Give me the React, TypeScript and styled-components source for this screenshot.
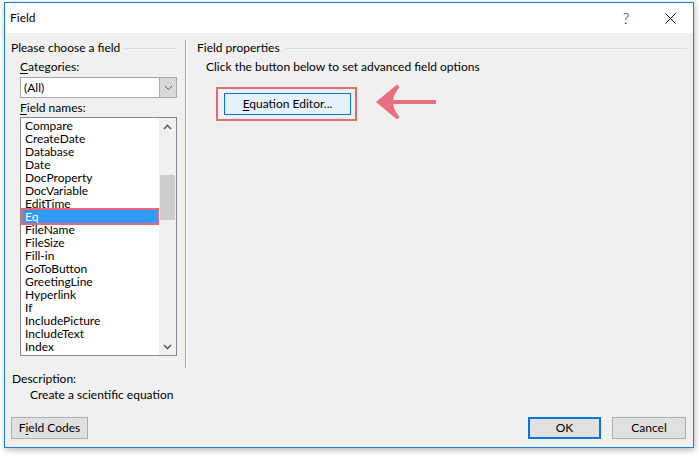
import React from "react";
import styled, { createGlobalStyle } from "styled-components";

const FONT = `Lato, "Noto Sans", sans-serif`;

const Global = createGlobalStyle`
  html, body { margin: 0; padding: 0; background: #ffffff; }
  body { font-family: ${FONT}; font-size: 12px; color: #000; }
  * { box-sizing: border-box; }
`;

const Page = styled.div`
  width: 699px;
  height: 455px;
  padding: 2px 0 0 4px;
`;

const Window = styled.div`
  width: 690px;
  height: 446px;
  border: 1px solid #1c7fd6;
  box-shadow: 1px 2px 6px rgba(0, 0, 0, 0.28);
  display: flex;
  flex-direction: column;
  background: #f0f0f0;
`;

const TitleBar = styled.div`
  height: 30px;
  background: #ffffff;
  display: flex;
  align-items: center;
`;

const Title = styled.div`
  flex: 1;
  padding-left: 5px;
  font-size: 12px;
  line-height: 16px;
`;

const CaptionButton = styled.div<{ $pl?: number }>`
  width: 46px;
  height: 30px;
  display: flex;
  align-items: center;
  justify-content: center;
  padding-left: ${(p) => p.$pl ?? 0}px;
  font-size: 15px;
  font-weight: 300;
  color: #111;
`;

const Body = styled.div`
  flex: 1;
  display: flex;
  flex-direction: column;
  padding: 7px 6px 8px 6px;
`;

const Main = styled.div`
  height: 328px;
  display: flex;
`;

const LeftCol = styled.div`
  width: 166px;
  display: flex;
  flex-direction: column;
`;

const Separator = styled.div`
  margin-left: 8px;
  width: 2px;
  border-left: 1px solid #a0a0a0;
  border-right: 1px solid #ffffff;
`;

const RightCol = styled.div`
  flex: 1;
  display: flex;
  flex-direction: column;
`;

const GroupHeader = styled.div<{ $indent?: number; $gap: number }>`
  display: flex;
  align-items: center;
  height: 16px;
  line-height: 16px;
  padding-left: ${(p) => p.$indent ?? 0}px;
  white-space: nowrap;
  &::after {
    content: "";
    flex: 1;
    height: 1px;
    background: #dcdcdc;
    margin-left: ${(p) => p.$gap}px;
  }
`;

const FieldLabel = styled.div<{ $mt: number }>`
  margin-top: ${(p) => p.$mt}px;
  padding-left: 9px;
  height: 16px;
  line-height: 16px;
`;

const U = styled.span`
  text-decoration: underline;
  text-underline-offset: 2px;
`;

const Combo = styled.div`
  margin: 2px 0 0 9px;
  width: 157px;
  height: 21px;
  border: 1px solid #a8a8a8;
  background: #ffffff;
  display: flex;
`;

const ComboText = styled.div`
  flex: 1;
  padding-left: 3px;
  line-height: 19px;
`;

const ComboButton = styled.div`
  width: 17px;
  background: #dadada;
  border-left: 1px solid #a8a8a8;
  display: flex;
  align-items: center;
  justify-content: center;
`;

const ListBox = styled.div`
  margin: 1px 0 0 9px;
  width: 157px;
  height: 239px;
  border: 1px solid #828790;
  background: #ffffff;
  display: flex;
  overflow: hidden;
`;

const Items = styled.div`
  flex: 1;
  padding-top: 1px;
  display: flex;
  flex-direction: column;
`;

const Item = styled.div<{ $selected?: boolean }>`
  height: 13px;
  line-height: 13px;
  margin: 0 2px;
  padding-left: 2px;
  white-space: nowrap;
  background: ${(p) => (p.$selected ? "#3399ff" : "transparent")};
  color: ${(p) => (p.$selected ? "#ffffff" : "#000000")};
  box-shadow: ${(p) => (p.$selected ? "0 0 0 2px #e0697a" : "none")};
  position: relative;
  z-index: ${(p) => (p.$selected ? 1 : 0)};
`;

const ScrollBar = styled.div`
  width: 17px;
  background: #f0f0f0;
  display: flex;
  flex-direction: column;
`;

const ScrollArrow = styled.div`
  height: 17px;
  display: flex;
  align-items: center;
  justify-content: center;
`;

const Track = styled.div`
  flex: 1;
`;

const Thumb = styled.div`
  margin: 0 1px;
  background: #cdcdcd;
`;

const Intro = styled.div`
  margin: 3px 0 0 19px;
  height: 16px;
  line-height: 16px;
`;

const ActionRow = styled.div`
  margin: 8px 0 0 29px;
  display: flex;
  align-items: center;
`;

const Highlight = styled.div`
  border: 2px solid #e0697a;
  padding: 4px 4px 4px 6px;
`;

const Button = styled.div<{ $w: number; $default?: boolean; $hot?: boolean }>`
  width: ${(p) => p.$w}px;
  height: 22px;
  display: flex;
  align-items: center;
  justify-content: center;
  background: ${(p) => (p.$hot ? "#e5f1fb" : "#e1e1e1")};
  border: ${(p) => (p.$default ? "2px solid #0078d7" : p.$hot ? "1px solid #0078d7" : "1px solid #adadad")};
  font-size: 12px;
  line-height: 16px;
  color: #000;
`;

const ArrowSvg = styled.svg`
  margin: 0 0 3px 19px;
  display: block;
`;

const DescLabel = styled.div`
  margin-top: 3px;
  padding-left: 1px;
  height: 16px;
  line-height: 16px;
`;

const DescText = styled.div`
  padding-left: 19px;
  height: 16px;
  line-height: 16px;
`;

const Footer = styled.div`
  margin-top: 14px;
  display: flex;
  justify-content: space-between;
  padding-right: 1px;
`;

const ButtonGroup = styled.div`
  display: flex;
  gap: 11px;
`;

const Chevron = ({ dir }: { dir: "up" | "down" }) => (
  <svg width="9" height="6" viewBox="0 0 9 6">
    <polyline
      points={dir === "up" ? "1,5 4.5,1.5 8,5" : "1,1 4.5,4.5 8,1"}
      fill="none"
      stroke="#606060"
      strokeWidth="1.6"
    />
  </svg>
);

const names = [
  "Compare",
  "CreateDate",
  "Database",
  "Date",
  "DocProperty",
  "DocVariable",
  "EditTime",
  "Eq",
  "FileName",
  "FileSize",
  "Fill-in",
  "GoToButton",
  "GreetingLine",
  "Hyperlink",
  "If",
  "IncludePicture",
  "IncludeText",
  "Index",
];

export default function App() {
  return (
    <>
      <Global />
      <Page>
        <Window>
          <TitleBar>
            <Title>Field</Title>
            <CaptionButton $pl={4}>?</CaptionButton>
            <CaptionButton>
              <svg width="11" height="11" viewBox="0 0 11 11">
                <path d="M0.5 0.5 L10.5 10.5 M10.5 0.5 L0.5 10.5" stroke="#111" strokeWidth="1" />
              </svg>
            </CaptionButton>
          </TitleBar>
          <Body>
            <Main>
              <LeftCol>
                <GroupHeader $gap={5}>Please choose a field</GroupHeader>
                <FieldLabel $mt={3}>
                  <U>C</U>ategories:
                </FieldLabel>
                <Combo>
                  <ComboText>(All)</ComboText>
                  <ComboButton>
                    <svg width="9" height="6" viewBox="0 0 9 6">
                      <polyline points="1,1 4.5,4.5 8,1" fill="none" stroke="#555" strokeWidth="1" />
                    </svg>
                  </ComboButton>
                </Combo>
                <FieldLabel $mt={2}>
                  <U>F</U>ield names:
                </FieldLabel>
                <ListBox>
                  <Items>
                    {names.map((n) => (
                      <Item key={n} $selected={n === "Eq"}>
                        {n}
                      </Item>
                    ))}
                  </Items>
                  <ScrollBar>
                    <ScrollArrow>
                      <Chevron dir="up" />
                    </ScrollArrow>
                    <Track>
                      <Thumb style={{ marginTop: 40, height: 45 }} />
                    </Track>
                    <ScrollArrow>
                      <Chevron dir="down" />
                    </ScrollArrow>
                  </ScrollBar>
                </ListBox>
              </LeftCol>
              <Separator />
              <RightCol>
                <GroupHeader $indent={10} $gap={6}>
                  Field properties
                </GroupHeader>
                <Intro>Click the button below to set advanced field options</Intro>
                <ActionRow>
                  <Highlight>
                    <Button $w={127} $hot>
                      <span>
                        <U>E</U>quation Editor...
                      </span>
                    </Button>
                  </Highlight>
                  <ArrowSvg width="60" height="38" viewBox="0 0 60 38">
                    <path
                      d="M0,19 L21,1.5 L23.5,4 C19.5,9 17.5,13.5 17,17 L60,17 L60,21 L17,21 C17.5,24.5 19.5,29 23.5,34 L21,36.5 Z"
                      fill="#e8707f"
                    />
                  </ArrowSvg>
                </ActionRow>
              </RightCol>
            </Main>
            <DescLabel>Description:</DescLabel>
            <DescText>Create a scientific equation</DescText>
            <Footer>
              <Button $w={77}>
                <span>
                  F<U>i</U>eld Codes
                </span>
              </Button>
              <ButtonGroup>
                <Button $w={73} $default>
                  OK
                </Button>
                <Button $w={74}>Cancel</Button>
              </ButtonGroup>
            </Footer>
          </Body>
        </Window>
      </Page>
    </>
  );
}
